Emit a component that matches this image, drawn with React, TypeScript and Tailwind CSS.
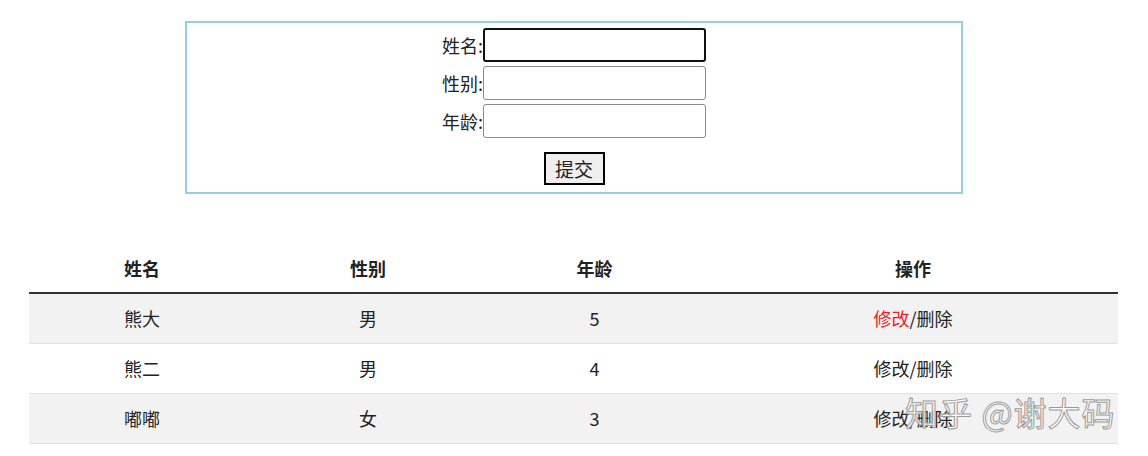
import { useState } from "react";

const rows = [
  { name: "熊大", sex: "男", age: 5 },
  { name: "熊二", sex: "男", age: 4 },
  { name: "嘟嘟", sex: "女", age: 3 },
];

const fields = [
  { id: "name", label: "姓名" },
  { id: "sex", label: "性别" },
  { id: "age", label: "年龄" },
];

export default function App() {
  const [form, setForm] = useState<Record<string, string>>({ name: "", sex: "", age: "" });

  return (
    <div
      className="relative w-[1148px] h-[456px] bg-white text-[18px] text-[#222]"
      style={{ fontFamily: '"Noto Sans CJK SC", "Noto Sans", sans-serif' }}
    >
      {/* Form */}
      <div className="pt-[21px] flex justify-center">
        <form
          className="w-[778px] h-[173px] border-2 border-[#93cfe2] flex flex-col items-center pt-[5px]"
          onSubmit={(e) => e.preventDefault()}
        >
          <div className="flex flex-col gap-[4px]">
            {fields.map((f, i) => (
              <div key={f.id} className="flex items-center h-[34px]">
                <span className="leading-none">{f.label}:</span>
                <input
                  value={form[f.id]}
                  onChange={(e) => setForm({ ...form, [f.id]: e.target.value })}
                  className={`w-[223px] h-[34px] bg-white rounded-[3px] outline-none ${
                    i === 0 ? "border-2 border-[#111]" : "border border-[#8a8a8a]"
                  }`}
                />
              </div>
            ))}
          </div>
          <button
            type="submit"
            className="mt-[14px] w-[61px] h-[33px] border-2 border-black bg-[#efefef] text-[19px] leading-none"
          >
            提交
          </button>
        </form>
      </div>

      {/* Table */}
      <div className="mt-[50px] px-[29px]">
        <table className="w-[1089px] border-collapse text-center">
          <thead>
            <tr className="h-[49px] border-b-2 border-[#333]">
              <th className="w-[226px] font-bold">姓名</th>
              <th className="w-[226px] font-bold">性别</th>
              <th className="w-[227px] font-bold">年龄</th>
              <th className="font-bold">操作</th>
            </tr>
          </thead>
          <tbody>
            {rows.map((r, i) => (
              <tr
                key={r.name}
                className={`h-[50px] border-b border-[#e2e2e2] ${i % 2 === 0 ? "bg-[#f2f2f2]" : "bg-white"}`}
              >
                <td>{r.name}</td>
                <td>{r.sex}</td>
                <td>{r.age}</td>
                <td>
                  <span className={i === 0 ? "text-[#e8231f]" : ""}>修改</span>/删除
                </td>
              </tr>
            ))}
          </tbody>
        </table>
      </div>

      {/* watermark */}
      <div
        className="absolute left-[905px] top-[388px] text-[33px] text-white/80 tracking-[1px] pointer-events-none whitespace-nowrap"
        style={{ WebkitTextStroke: "1px #9a9a9a" }}
      >
        知乎 @谢大码
      </div>
    </div>
  );
}
